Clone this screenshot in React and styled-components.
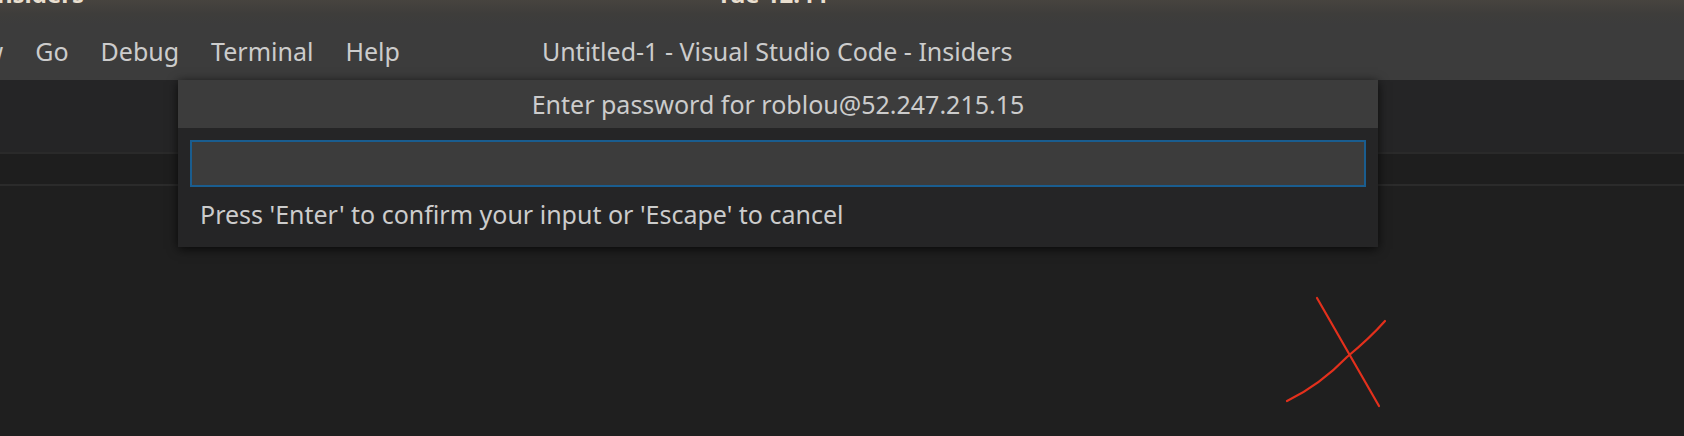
import React from 'react';
import styled, { createGlobalStyle } from 'styled-components';

const GlobalStyle = createGlobalStyle`
  html, body {
    margin: 0;
    padding: 0;
    background: #1f1f1f;
    overflow: hidden;
  }
  body {
    font-family: 'Noto Sans', 'Open Sans', sans-serif;
  }
`;

const Screen = styled.div`
  position: relative;
  width: 1684px;
  height: 436px;
  display: flex;
  flex-direction: column;
  background: #1f1f1f;
  overflow: hidden;
`;

const Header = styled.header`
  display: flex;
  flex-direction: column;
  height: 80px;
  background: linear-gradient(to bottom, #47443f 0px, #3e3d3b 14px, #3c3c3c 24px);
`;

const TopPanel = styled.div`
  display: flex;
  height: 5px;
  overflow: hidden;
  font-weight: 700;
  font-size: 24px;
  line-height: 24px;
  color: #e9dfcf;
`;

const AppName = styled.div`
  width: 84px;
  display: flex;
  justify-content: flex-end;
  overflow: hidden;
  white-space: nowrap;
  margin-top: -18px;
`;

const Clock = styled.div`
  margin-left: 633px;
  margin-top: -18px;
  white-space: nowrap;
`;

const MenuBar = styled.nav`
  display: flex;
  align-items: center;
  height: 75px;
  padding-top: 16px;
  box-sizing: border-box;
  color: #cccccc;
  font-size: 25px;
  white-space: nowrap;
  overflow: hidden;
`;

const MenuList = styled.div`
  display: flex;
  margin-left: ${({ $offset }) => $offset}px;
`;

const MenuItem = styled.span`
  padding: 0 16px;
`;

const WindowTitle = styled.span`
  margin-left: ${({ $offset }) => $offset}px;
`;

const TabStrip = styled.div`
  height: 72px;
  background: #252526;
  border-bottom: 2px solid #2a2a2a;
`;

const Breadcrumbs = styled.div`
  height: 30px;
  background: #1e1e1e;
  border-bottom: 2px solid #2b2b2b;
`;

const Editor = styled.main`
  flex: 1;
  background: #1f1f1f;
`;

const QuickInput = styled.div`
  position: absolute;
  top: 80px;
  left: 178px;
  width: 1200px;
  display: flex;
  flex-direction: column;
  background: #252526;
  box-shadow: 0 2px 10px rgba(0, 0, 0, 0.75);
  color: #cccccc;
  font-size: 25px;
`;

const QuickTitle = styled.div`
  height: 48px;
  display: flex;
  align-items: center;
  justify-content: center;
  background: #3c3c3c;
`;

const QuickBody = styled.div`
  display: flex;
  flex-direction: column;
  padding: 12px 12px 0 12px;
`;

const InputBox = styled.input`
  height: 47px;
  box-sizing: border-box;
  margin: 0;
  padding: 0 8px;
  background: #3c3c3c;
  border: 2px solid #1a5d8f;
  outline: none;
  color: #cccccc;
  font: inherit;
`;

const Hint = styled.div`
  padding: 12px 0 18px 10px;
  line-height: 30px;
`;

const Scribble = styled.svg`
  position: absolute;
  left: 1280px;
  top: 290px;
`;

const menu = ['View', 'Go', 'Debug', 'Terminal', 'Help'];

const App = () => (
  <Screen>
    <GlobalStyle />
    <Header>
      <TopPanel>
        <AppName>Visual Studio Code - Insiders</AppName>
        <Clock>Tue 12:44</Clock>
      </TopPanel>
      <MenuBar>
        <MenuList $offset={-67.5}>
          {menu.map((item) => (
            <MenuItem key={item}>{item}</MenuItem>
          ))}
        </MenuList>
        <WindowTitle $offset={126}>Untitled-1 - Visual Studio Code - Insiders</WindowTitle>
      </MenuBar>
    </Header>
    <TabStrip />
    <Breadcrumbs />
    <Editor />

    <QuickInput>
      <QuickTitle>Enter password for roblou@52.247.215.15</QuickTitle>
      <QuickBody>
        <InputBox type="password" aria-label="password" />
        <Hint>Press 'Enter' to confirm your input or 'Escape' to cancel</Hint>
      </QuickBody>
    </QuickInput>

    <Scribble width="120" height="130" viewBox="1280 290 120 130">
      <path d="M1317 298 L1379 406" stroke="#e3301c" strokeWidth="2.2" fill="none" strokeLinecap="round" />
      <path d="M1287 401 Q1320 385 1347 357 Q1370 338 1385 321" stroke="#e3301c" strokeWidth="2.2" fill="none" strokeLinecap="round" />
    </Scribble>
  </Screen>
);

export default App;
